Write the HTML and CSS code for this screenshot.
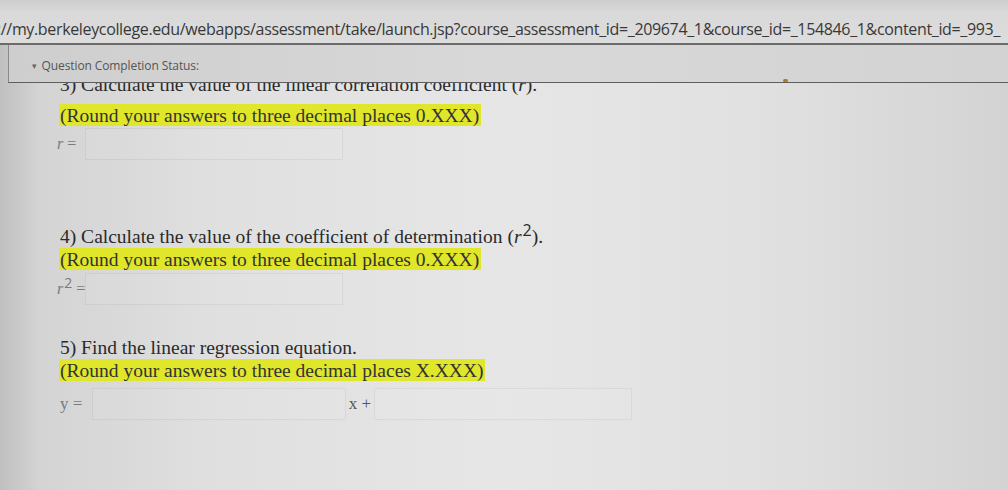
FILE: index.html
```html
<!DOCTYPE html>
<html>
<head>
<meta charset="utf-8">
<link rel="stylesheet" href="styles.css">
</head>
<body>
<div class="screen">
  <div class="urlbar"><span class="url">://my.berkeleycollege.edu/webapps/assessment/take/launch.jsp?course_assessment_id=_209674_1&amp;course_id=_154846_1&amp;content_id=_993_</span></div>
  <div class="status-panel">
    <span class="tri">&#9662;</span>
    <span class="status-text">Question Completion Status:</span>
    <span class="speck"></span>
  </div>
  <div class="content">
    <div class="q q3">
      <p class="qtext">3) Calculate the value of the linear correlation coefficient (<i>r</i>).</p>
      <p class="hl"><span>(Round your answers to three decimal places 0.XXX)</span></p>
      <div class="row"><span class="label"><i>r</i> =</span><span class="field"></span></div>
    </div>
    <div class="q q4">
      <p class="qtext">4) Calculate the value of the coefficient of determination (<i>r</i><sup class="sq">2</sup>).</p>
      <p class="hl"><span>(Round your answers to three decimal places 0.XXX)</span></p>
      <div class="row"><span class="label"><i>r</i><sup class="sq small">2</sup> =</span><span class="field"></span></div>
    </div>
    <div class="q q5">
      <p class="qtext">5) Find the linear regression equation.</p>
      <p class="hl"><span>(Round your answers to three decimal places X.XXX)</span></p>
      <div class="row"><span class="label y">y =</span><span class="field f1"></span><span class="xplus">x +</span><span class="field f2"></span></div>
    </div>
  </div>
</div>
</body>
</html>
```

FILE: styles.css
```css
html, body {
  margin: 0;
  padding: 0;
}
body {
  width: 1008px;
  height: 490px;
  overflow: hidden;
}
.screen {
  width: 1008px;
  height: 490px;
  overflow: hidden;
  background: linear-gradient(90deg, #c0c0c0 0%, #d4d4d4 4%, #e0e0e0 22%, #e6e6e6 50%, #e1e1e1 75%, #d3d3d3 100%);
  display: flex;
  flex-direction: column;
}
.urlbar {
  flex: none;
  background: linear-gradient(180deg, #cdcdcd 0px, #d9d9d9 12px, #dddddd 100%);
  border-bottom: 2px solid #6b6b6b;
  display: flex;
  align-items: flex-end;
  padding-bottom: 3px;
  box-sizing: border-box;
  height: 45px;
  overflow: hidden;
  white-space: nowrap;
}
.url {
  font-family: "Open Sans", "DejaVu Sans", sans-serif;
  font-size: 16px;
  color: #383838;
  letter-spacing: -0.35px;
  margin-left: -3px;
  line-height: 22px;
}
.status-panel {
  flex: none;
  margin-left: 8px;
  height: 38px;
  box-sizing: border-box;
  border-left: 1px solid #8a8a8a;
  border-bottom: 1px solid #5e5e5e;
  background: linear-gradient(90deg, #cecece, #d8d8d8 50%, #d3d3d3);
  display: flex;
  align-items: center;
  padding-left: 23px;
  padding-top: 3px;
  font-family: "Open Sans", "DejaVu Sans", sans-serif;
}
.tri {
  font-size: 9px;
  color: #666;
  margin-right: 5px;
  margin-top: 1px;
}
.status-text {
  font-size: 12px;
  color: #555;
  letter-spacing: -0.1px;
}
.speck {
  width: 5px;
  height: 3px;
  border-radius: 2px;
  background: #b07a2a;
  margin-left: 584px;
  margin-top: 30px;
}
.content {
  flex: 1;
  overflow: hidden;
  padding-left: 60px;
  font-family: "Liberation Serif", "Times New Roman", serif;
  color: #2a2a2a;
}
.q p {
  margin: 0;
}
.qtext {
  font-size: 19.5px;
  line-height: 23px;
  white-space: nowrap;
}
.q3 .qtext {
  margin-top: -10px;
}
.q3 .hl {
  margin-top: 8px;
}
.q4 {
  margin-top: 65px;
}
.q5 {
  margin-top: 31px;
}
.hl {
  font-size: 19.5px;
  line-height: 23px;
  margin-top: 1px;
  white-space: nowrap;
}
.hl span {
  background: #e0e62a;
  color: #333;
  padding: 1px 2px 0 1px;
  margin-left: -1px;
}
.sq {
  font-family: "Open Sans", "DejaVu Sans", sans-serif;
  font-size: 16px;
  line-height: 0;
  vertical-align: 7px;
  margin-left: 1px;
}
.sq.small {
  font-size: 14px;
  vertical-align: 6px;
}
.row {
  display: flex;
  align-items: center;
  height: 32px;
  margin-top: 1px;
}
.q4 .row {
  margin-top: 2px;
}
.q5 .row {
  margin-top: 6px;
}
.label {
  font-size: 16px;
  color: #7a7a7a;
  width: 28px;
  margin-left: -3px;
  white-space: nowrap;
}
.label.y {
  font-size: 17px;
  width: 32px;
  margin-left: 0;
}
.field {
  display: block;
  width: 256px;
  height: 30px;
  border: 1px solid rgba(0, 0, 0, 0.05);
  background: rgba(255, 255, 255, 0.05);
}
.xplus {
  font-size: 17px;
  color: #555;
  width: 28px;
  text-align: center;
}
.field.f1 {
  width: 252px;
}
.field.f2 {
  width: 256px;
}
```
